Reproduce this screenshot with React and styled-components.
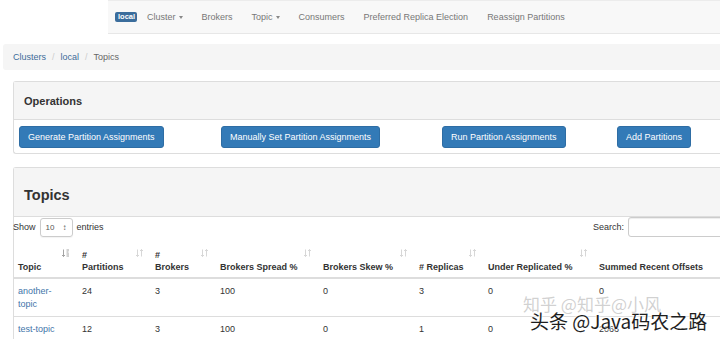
import React from "react";
import styled, { createGlobalStyle } from "styled-components";

const Global = createGlobalStyle`
  html, body { margin: 0; padding: 0; background: #fff; overflow: hidden; }
  body { font-family: "Liberation Sans", Arial, Helvetica, sans-serif; font-size: 9px; color: #333; }
  * { box-sizing: border-box; }
`;

const Page = styled.div`
  position: relative;
  width: 720px;
  height: 339px;
  overflow: hidden;
`;

const Navbar = styled.nav`
  margin-left: 108px;
  height: 34px;
  background: #f8f8f8;
  border-top: 1px solid #ececec;
  border-bottom: 1px solid #e7e7e7;
  display: flex;
  align-items: center;
  padding-left: 7px;
`;

const Brand = styled.span`
  background: #3b6d9c;
  color: #fff;
  font-weight: bold;
  font-size: 7.5px;
  line-height: 10px;
  padding: 0 3px;
  border-radius: 2px;
  width: 22px;
  text-align: center;
`;

const NavList = styled.div`
  display: flex;
  gap: 19px;
  margin-left: 10px;
`;

const NavItem = styled.span`
  color: #777;
  font-size: 9px;
  white-space: nowrap;
`;

const Caret = styled.span`
  display: inline-block;
  width: 0;
  height: 0;
  margin-left: 3px;
  vertical-align: middle;
  border-top: 3px solid #888;
  border-left: 2.5px solid transparent;
  border-right: 2.5px solid transparent;
`;

const Breadcrumb = styled.div`
  margin: 10px 0 0 3px;
  width: 760px;
  height: 26px;
  background: #f5f5f5;
  border-radius: 3px;
  display: flex;
  align-items: center;
  padding-left: 10px;
  font-size: 9px;
`;

const Crumb = styled.span`
  color: ${(p) => (p.$active ? "#666" : "#3d6b99")};
`;

const Sep = styled.span`
  color: #ccc;
  padding: 0 6px;
`;

const Content = styled.div`
  padding-left: 13px;
  margin-top: 11px;
`;

const Panel = styled.section`
  width: 760px;
  border: 1px solid #ddd;
  border-right: none;
  border-radius: 3px 0 0 3px;
  margin-bottom: ${(p) => p.$mb || 0}px;
`;

const PanelHeading = styled.div`
  background: #f5f5f5;
  border-bottom: 1px solid #ddd;
  height: ${(p) => p.$h}px;
  display: flex;
  align-items: center;
  padding: ${(p) => p.$pt || 0}px 0 0 10px;
`;

const PanelTitle = styled.h3`
  margin: 0;
  font-weight: bold;
  font-size: ${(p) => p.$size}px;
  color: #333;
`;

const ButtonRow = styled.div`
  display: grid;
  grid-template-columns: 202px 221px 175px auto;
  padding: 6px 5px 5px;
  justify-items: start;
`;

const Button = styled.button`
  font-family: inherit;
  font-size: 9px;
  color: #fff;
  background: #337ab7;
  border: 1px solid #2e6da4;
  border-radius: 3px;
  height: 22px;
  padding: 0 8px;
  white-space: nowrap;
`;

const Controls = styled.div`
  width: 722px;
  height: 20px;
  display: flex;
  align-items: center;
  justify-content: space-between;
  margin-left: -1px;
`;

const Inline = styled.div`
  display: flex;
  align-items: center;
  gap: 4px;
  font-size: 9px;
`;

const SelectBox = styled.div`
  width: 33px;
  height: 19px;
  border: 1px solid #ccc;
  border-radius: 3px;
  display: flex;
  align-items: center;
  justify-content: space-between;
  padding: 0 5px;
  font-size: 8px;
  color: #555;
  box-shadow: 0 1px 1px rgba(0,0,0,0.05);
`;

const SearchInput = styled.div`
  width: 107px;
  height: 20px;
  border: 1px solid #ccc;
  border-radius: 3px 0 0 3px;
  box-shadow: inset 0 1px 1px rgba(0,0,0,0.075);
`;

const Table = styled.table`
  margin-top: 6px;
  border-collapse: collapse;
  table-layout: fixed;
  width: 722px;
  margin-left: -1px;
`;

const Th = styled.th`
  position: relative;
  text-align: left;
  vertical-align: bottom;
  font-weight: bold;
  font-size: 9px;
  line-height: 12px;
  padding: 6px 16px 4px 5px;
  border-bottom: 2px solid #ddd;
  color: #333;
  white-space: nowrap;
`;

const SortIcon = styled.span`
  position: absolute;
  top: 6px;
  right: 7px;
  display: flex;
`;

const Td = styled.td`
  vertical-align: top;
  font-size: 9px;
  line-height: 12.5px;
  padding: 6px 5px;
  border-bottom: 1px solid #ddd;
  color: #333;
`;

const Link = styled.span`
  color: #3f75aa;
`;

const Watermark = styled.div`
  position: absolute;
  left: ${(p) => p.$x}px;
  top: ${(p) => p.$y}px;
  font-family: "Noto Sans CJK SC", "Liberation Sans", sans-serif;
  font-size: ${(p) => p.$size}px;
  color: ${(p) => p.$color};
  white-space: nowrap;
  text-shadow: ${(p) => (p.$shadow ? "0 0 2px #fff, 0 0 2px #fff, 0 0 3px #fff" : "none")};
  line-height: 1;
`;

const BothArrows = () => (
  <svg width="7" height="8" viewBox="0 0 7 8">
    <path d="M1.5 0.5v7M0 6l1.5 1.5L3 6" stroke="#d3d3d3" strokeWidth="0.9" fill="none" />
    <path d="M5.5 7.5v-7M4 2l1.5-1.5L7 2" stroke="#d3d3d3" strokeWidth="0.9" fill="none" />
  </svg>
);

const AlphaSort = () => (
  <svg width="8" height="8" viewBox="0 0 8 8">
    <path d="M1.5 0.5v7M0 6l1.5 1.5L3 6" stroke="#9a9a9a" strokeWidth="0.9" fill="none" />
    <path d="M4.5 1h2.5M4.5 3h2M4.5 5h2.5M4.5 7h2.5" stroke="#9a9a9a" strokeWidth="0.9" fill="none" />
  </svg>
);

const columns = [
  { top: "", bottom: "Topic", w: 64, alpha: true },
  { top: "#", bottom: "Partitions", w: 73 },
  { top: "#", bottom: "Brokers", w: 65 },
  { top: "", bottom: "Brokers Spread %", w: 103 },
  { top: "", bottom: "Brokers Skew %", w: 96 },
  { top: "", bottom: "# Replicas", w: 69 },
  { top: "", bottom: "Under Replicated %", w: 111 },
  { top: "", bottom: "Summed Recent Offsets", w: 141 },
];

const rows = [
  ["another-\ntopic", "24", "3", "100", "0", "3", "0", "0"],
  ["test-topic", "12", "3", "100", "0", "1", "0", "2066"],
];

export default function App() {
  return (
    <Page>
      <Global />
      <Navbar>
        <Brand>local</Brand>
        <NavList>
          <NavItem>Cluster<Caret /></NavItem>
          <NavItem>Brokers</NavItem>
          <NavItem>Topic<Caret /></NavItem>
          <NavItem>Consumers</NavItem>
          <NavItem>Preferred Replica Election</NavItem>
          <NavItem>Reassign Partitions</NavItem>
        </NavList>
      </Navbar>

      <Breadcrumb>
        <Crumb>Clusters</Crumb>
        <Sep>/</Sep>
        <Crumb>local</Crumb>
        <Sep>/</Sep>
        <Crumb $active>Topics</Crumb>
      </Breadcrumb>

      <Content>
        <Panel $mb={13}>
          <PanelHeading $h={38}>
            <PanelTitle $size={11}>Operations</PanelTitle>
          </PanelHeading>
          <ButtonRow>
            <Button>Generate Partition Assignments</Button>
            <Button>Manually Set Partition Assignments</Button>
            <Button>Run Partition Assignments</Button>
            <Button>Add Partitions</Button>
          </ButtonRow>
        </Panel>

        <Panel>
          <PanelHeading $h={49} $pt={6}>
            <PanelTitle $size={14.5}>Topics</PanelTitle>
          </PanelHeading>
          <Controls>
            <Inline>
              Show
              <SelectBox>
                <span>10</span>
                <span>&#8597;</span>
              </SelectBox>
              entries
            </Inline>
            <Inline>
              Search:
              <SearchInput />
            </Inline>
          </Controls>
          <Table>
            <colgroup>
              {columns.map((c, i) => (
                <col key={i} style={{ width: c.w }} />
              ))}
            </colgroup>
            <thead>
              <tr>
                {columns.map((c, i) => (
                  <Th key={i}>
                    {c.top || "\u00a0"}
                    <br />
                    {c.bottom}
                    <SortIcon>{c.alpha ? <AlphaSort /> : <BothArrows />}</SortIcon>
                  </Th>
                ))}
              </tr>
            </thead>
            <tbody>
              {rows.map((r, ri) => (
                <tr key={ri}>
                  {r.map((v, ci) => (
                    <Td key={ci}>
                      {ci === 0 ? (
                        <Link>
                          {v.split("\n").map((part, pi) => (
                            <React.Fragment key={pi}>
                              {pi > 0 && <br />}
                              {part}
                            </React.Fragment>
                          ))}
                        </Link>
                      ) : (
                        v
                      )}
                    </Td>
                  ))}
                </tr>
              ))}
            </tbody>
          </Table>
        </Panel>
      </Content>

      <Watermark $x={523} $y={295} $size={17} $color="rgba(170,170,170,0.55)">
        知乎 @知乎@小风
      </Watermark>
      <Watermark $x={530} $y={311} $size={19} $color="#1e1e1e" $shadow>
        头条 @Java码农之路
      </Watermark>
    </Page>
  );
}
